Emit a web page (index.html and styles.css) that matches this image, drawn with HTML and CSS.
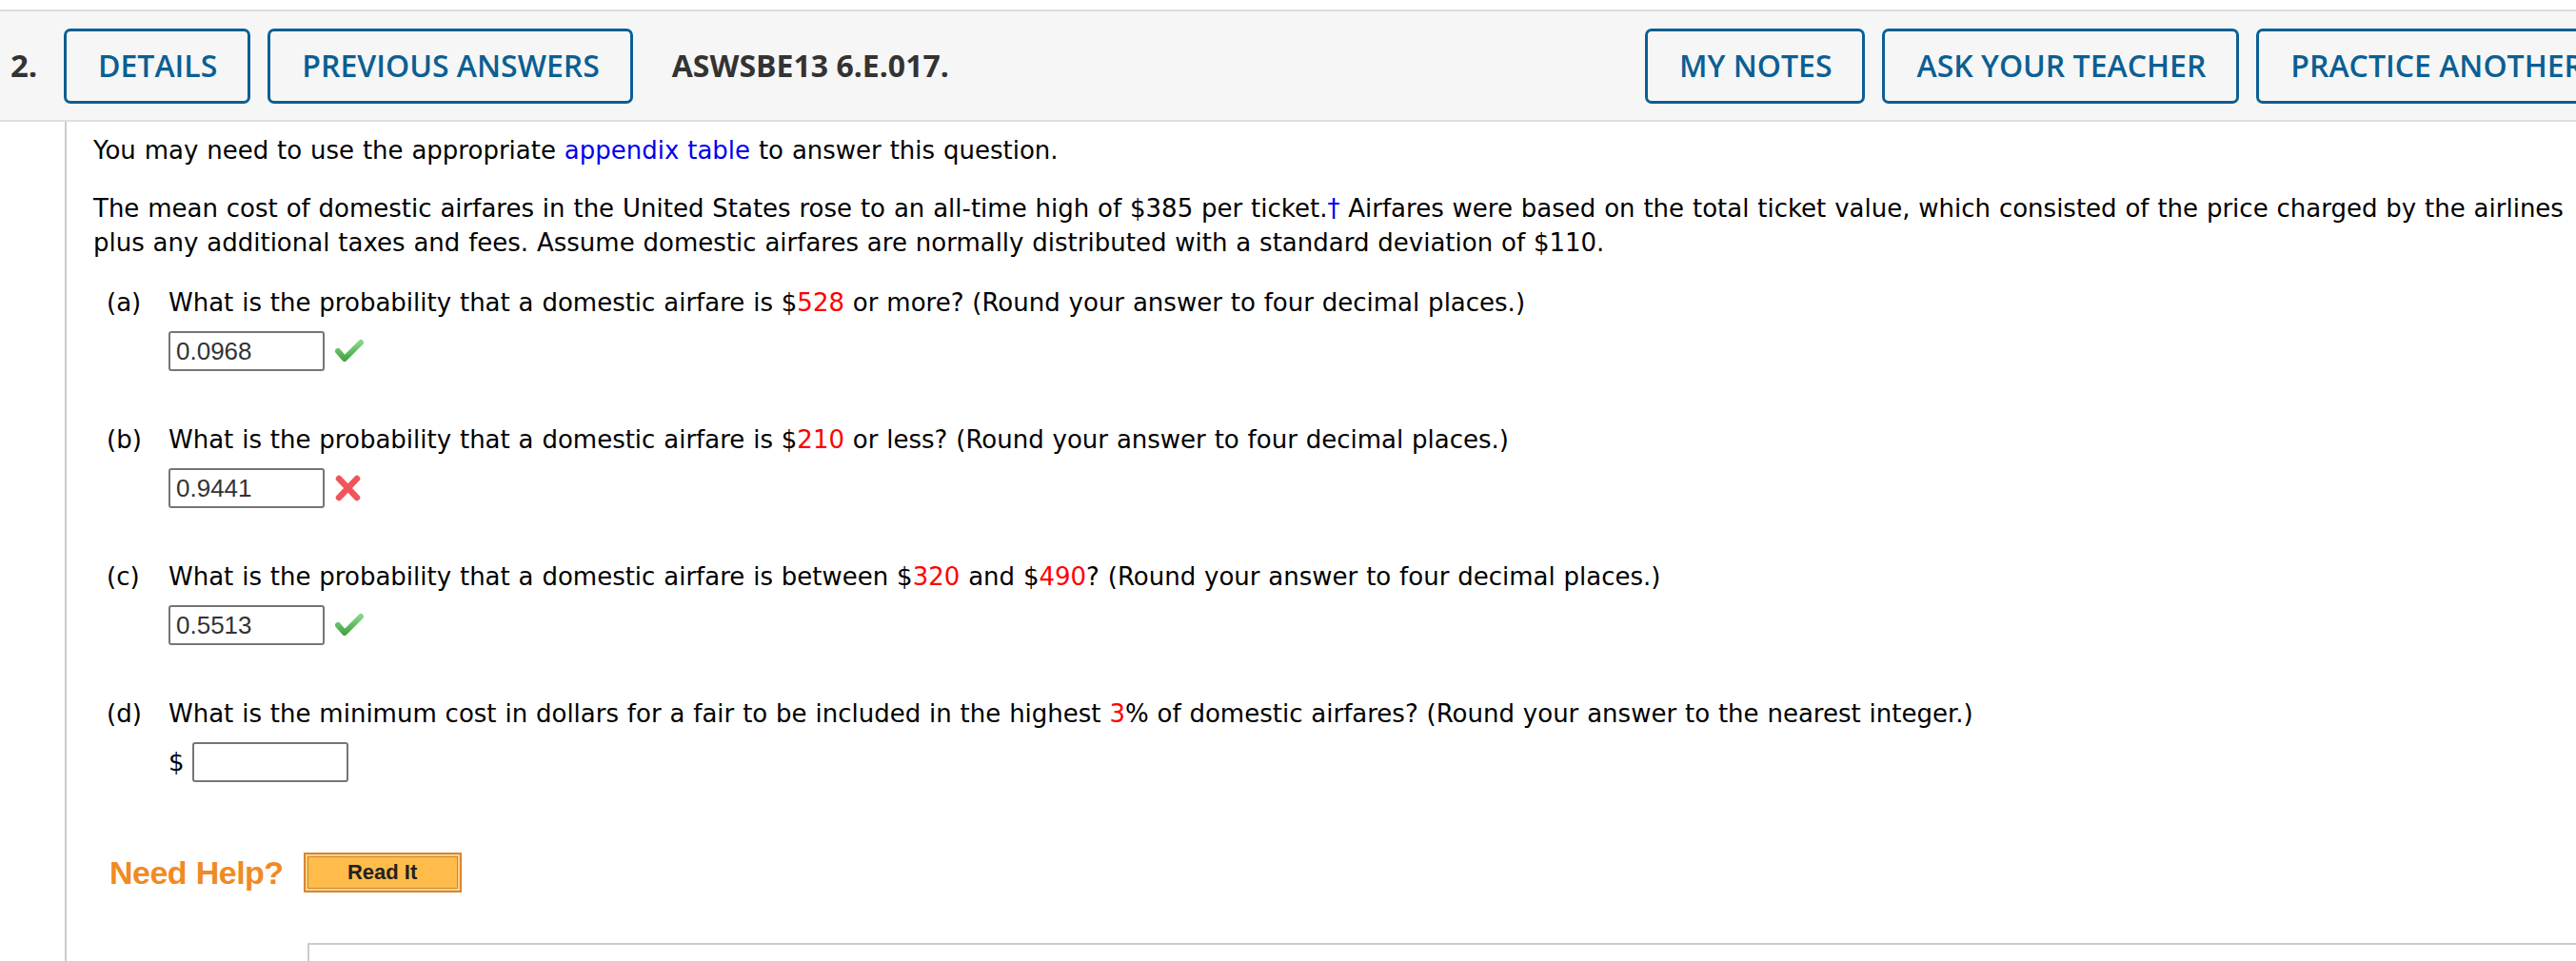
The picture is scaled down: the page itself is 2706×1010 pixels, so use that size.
FILE: index.html
```html
<!DOCTYPE html>
<html lang="en">
<head>
<meta charset="utf-8">
<title>ASWSBE13 6.E.017.</title>
<link rel="stylesheet" href="styles.css">
</head>
<body>
<div class="page">
  <div class="qhead">
    <span class="qnum">2.</span>
    <a class="btn" href="#">Details</a>
    <a class="btn" href="#">Previous Answers</a>
    <span class="qid">ASWSBE13 6.E.017.</span>
    <div class="actions">
      <a class="btn" href="#">My Notes</a>
      <a class="btn" href="#">Ask Your Teacher</a>
      <a class="btn" href="#">Practice Another</a>
    </div>
  </div>
  <div class="qbody">
    <p class="intro">You may need to use the appropriate <a class="link" href="#">appendix table</a> to answer this question.</p>
    <p class="stem">The mean cost of domestic airfares in the United States rose to an all-time high of $385 per ticket.<span class="dagger">†</span> Airfares were based on the total ticket value, which consisted of the price charged by the airlines plus any additional taxes and fees. Assume domestic airfares are normally distributed with a standard deviation of $110.</p>
    <ol class="parts">
      <li class="part">
        <div class="q"><span class="lbl">(a)</span><span class="qt">What is the probability that a domestic airfare is $<span class="red">528</span> or more? (Round your answer to four decimal places.)</span></div>
        <div class="ans">
          <input class="field" type="text" value="0.0968" readonly>
          <svg class="mark" width="32" height="26" viewBox="0 0 32 26"><defs><linearGradient id="gc" x1="0" y1="0" x2="0" y2="1"><stop offset="0" stop-color="#86d486"/><stop offset="1" stop-color="#45a845"/></linearGradient></defs><polyline points="4,13 11,21 28,4" fill="none" stroke="url(#gc)" stroke-width="6" stroke-linecap="round" stroke-linejoin="round"/></svg>
        </div>
      </li>
      <li class="part">
        <div class="q"><span class="lbl">(b)</span><span class="qt">What is the probability that a domestic airfare is $<span class="red">210</span> or less? (Round your answer to four decimal places.)</span></div>
        <div class="ans">
          <input class="field" type="text" value="0.9441" readonly>
          <svg class="mark" width="32" height="30" viewBox="0 0 32 30"><g stroke="#f2545b" stroke-width="6.5" stroke-linecap="round"><line x1="5" y1="5" x2="24" y2="25"/><line x1="24" y1="5" x2="5" y2="25"/></g></svg>
        </div>
      </li>
      <li class="part">
        <div class="q"><span class="lbl">(c)</span><span class="qt">What is the probability that a domestic airfare is between $<span class="red">320</span> and $<span class="red">490</span>? (Round your answer to four decimal places.)</span></div>
        <div class="ans">
          <input class="field" type="text" value="0.5513" readonly>
          <svg class="mark" width="32" height="26" viewBox="0 0 32 26"><defs><linearGradient id="gc2" x1="0" y1="0" x2="0" y2="1"><stop offset="0" stop-color="#86d486"/><stop offset="1" stop-color="#45a845"/></linearGradient></defs><polyline points="4,13 11,21 28,4" fill="none" stroke="url(#gc2)" stroke-width="6" stroke-linecap="round" stroke-linejoin="round"/></svg>
        </div>
      </li>
      <li class="part">
        <div class="q"><span class="lbl">(d)</span><span class="qt">What is the minimum cost in dollars for a fair to be included in the highest <span class="red">3</span>% of domestic airfares? (Round your answer to the nearest integer.)</span></div>
        <div class="ans">
          <span class="dollar">$</span>
          <input class="field" type="text" value="">
        </div>
      </li>
    </ol>
    <div class="help">
      <span class="need">Need Help?</span>
      <button class="readit" type="button">Read It</button>
    </div>
    <div class="next"></div>
  </div>
</div>
</body>
</html>
```

FILE: styles.css
```css
html, body {
  margin: 0;
  padding: 0;
  overflow: hidden;
  background: #ffffff;
}

.page {
  width: 2760px;
}

.qhead {
  display: flex;
  align-items: center;
  height: 114px;
  margin-top: 10px;
  padding: 0 11px;
  background: #f6f6f6;
  border-top: 2px solid #dedede;
  border-bottom: 2px solid #dedede;
  font-family: "Open Sans", "DejaVu Sans", sans-serif;
  line-height: 1.2;
}

.qnum {
  width: 56px;
  font-size: 33px;
  font-weight: 700;
  color: #333333;
}

.btn {
  display: inline-flex;
  align-items: center;
  box-sizing: border-box;
  height: 79px;
  padding: 0 32px 0 33px;
  border: 3px solid #0b5f93;
  border-radius: 7px;
  color: #0b5f93;
  font-size: 32px;
  font-weight: 600;
  text-transform: uppercase;
  text-decoration: none;
  white-space: nowrap;
}

.btn + .btn {
  margin-left: 18px;
}

.qid {
  margin-left: 41px;
  font-size: 32px;
  font-weight: 700;
  color: #333333;
}

.actions {
  display: flex;
  margin-left: auto;
}

.qbody {
  margin-left: 68px;
  padding: 12px 40px 0 28px;
  border-left: 2px solid #cccccc;
  font-family: "DejaVu Sans", Verdana, sans-serif;
  font-size: 26px;
  line-height: 36px;
  word-spacing: 0.6px;
  color: #000000;
  min-height: 900px;
}

.intro {
  margin: 0 0 25px;
}

.stem {
  margin: 0 0 27px;
}

.link {
  color: #0000ee;
  text-decoration: none;
}

.dagger {
  color: #0000ee;
}

.red {
  color: #ff0000;
}

.parts {
  list-style: none;
  margin: 0;
  padding: 0 0 0 14px;
}

.part {
  margin-bottom: 54px;
}

.q {
  display: flex;
}

.lbl {
  flex: none;
  width: 65px;
}

.ans {
  display: flex;
  align-items: center;
  margin: 12px 0 0 65px;
  height: 42px;
}

.field {
  box-sizing: border-box;
  width: 164px;
  height: 42px;
  margin: 0;
  padding: 0 6px;
  border: 2px solid #757575;
  border-radius: 3px;
  background: #ffffff;
  font-family: "Liberation Sans", Arial, sans-serif;
  font-size: 26px;
  color: #333333;
  outline: none;
}

.mark {
  margin-left: 10px;
}

.dollar {
  margin-right: 8px;
}

.help {
  display: flex;
  align-items: center;
  margin-top: 74px;
  padding-left: 17px;
}

.need {
  font-family: "Liberation Sans", Arial, sans-serif;
  font-size: 34px;
  font-weight: 700;
  color: #f08a24;
  letter-spacing: -0.5px;
}

.readit {
  box-sizing: border-box;
  width: 166px;
  height: 42px;
  margin: 0 0 0 21px;
  padding: 0;
  border: 2px solid #dc8530;
  background: #ffbc4a;
  box-shadow: inset 0 0 0 2px #ffd28a, inset 0 0 0 3px #c9882e;
  font-family: "Liberation Sans", Arial, sans-serif;
  font-size: 22px;
  font-weight: 700;
  color: #222222;
  cursor: pointer;
}

.next {
  margin: 53px 0 0 225px;
  height: 100px;
  border: 2px solid #cccccc;
  border-bottom: none;
}
```
